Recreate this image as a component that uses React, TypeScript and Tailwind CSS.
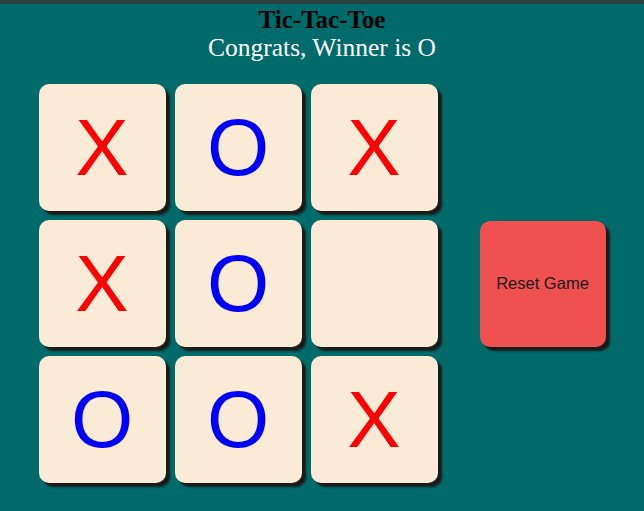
import React, { useState } from 'react';

type Mark = 'X' | 'O' | '';

const startBoard: Mark[] = ['X', 'O', 'X', 'X', 'O', '', 'O', 'O', 'X'];

const lines = [
  [0, 1, 2], [3, 4, 5], [6, 7, 8],
  [0, 3, 6], [1, 4, 7], [2, 5, 8],
  [0, 4, 8], [2, 4, 6],
];

function findWinner(board: Mark[]): Mark {
  for (const [a, b, c] of lines) {
    if (board[a] && board[a] === board[b] && board[a] === board[c]) return board[a];
  }
  return '';
}

export default function App() {
  const [board, setBoard] = useState<Mark[]>(startBoard);
  const [turn, setTurn] = useState<Mark>('X');
  const winner = findWinner(board);

  const play = (i: number) => {
    if (board[i] || winner) return;
    const next = [...board];
    next[i] = turn;
    setBoard(next);
    setTurn(turn === 'X' ? 'O' : 'X');
  };

  const reset = () => {
    setBoard(Array(9).fill(''));
    setTurn('X');
  };

  return (
    <div className="min-h-screen bg-[#016a6a] border-t-4 border-[#2c403e] font-['Liberation_Serif',serif]">
      <h1 className="text-center text-[25px] font-bold text-black leading-[28px] pt-[2px]">Tic-Tac-Toe</h1>
      <p className="text-center text-[25.5px] text-white leading-[28px]">
        {winner ? `Congrats, Winner is ${winner}` : `Next player: ${turn}`}
      </p>

      <div className="flex justify-center items-center gap-[42px] mt-[22px]">
        <div className="grid grid-cols-3 gap-[9px]">
          {board.map((cell, i) => (
            <button
              key={i}
              onClick={() => play(i)}
              className={`w-[127px] h-[127px] rounded-[10px] bg-[#faebd7] shadow-[4px_4px_2px_#1a1a1a] flex items-center justify-center font-['Liberation_Sans',Arial,sans-serif] text-[80px] leading-none ${
                cell === 'X' ? 'text-[#ff0000]' : 'text-[#0000ff]'
              }`}
            >
              {cell}
            </button>
          ))}
        </div>

        <button
          onClick={reset}
          className="w-[126px] h-[126px] rounded-[10px] bg-[#ef5050] shadow-[4px_4px_2px_#1a1a1a] text-[16.5px] text-[#1c1c1c] font-['Liberation_Sans',Arial,sans-serif]"
        >
          Reset Game
        </button>
      </div>
    </div>
  );
}
